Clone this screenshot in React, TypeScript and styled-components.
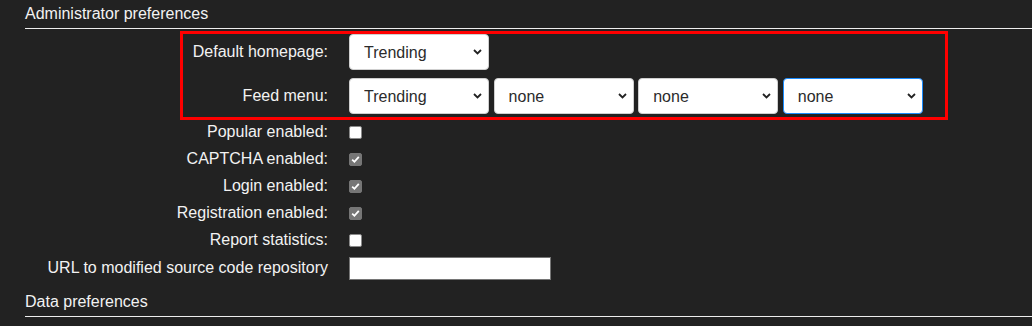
import React from 'react';
import styled, { createGlobalStyle } from 'styled-components';

const GlobalStyle = createGlobalStyle`
  html, body {
    margin: 0;
    padding: 0;
    background: #222222;
  }
  body {
    font-family: "Liberation Sans", Arial, sans-serif;
    font-size: 16px;
    color: #f2f2f2;
    overflow: hidden;
  }
`;

const Page = styled.div`
  width: 1032px;
  height: 326px;
  overflow: hidden;
  background: #222222;
`;

const SectionTitle = styled.div`
  margin-left: 25px;
  padding: 5px 0;
  line-height: 18px;
  border-bottom: 1px solid #eeeeee;
`;

const Highlight = styled.div`
  position: relative;
  padding-top: 5px;
`;

const Annotation = styled.div`
  position: absolute;
  left: 180px;
  top: 2px;
  width: 762px;
  height: 83px;
  border: 3px solid #ff0000;
  pointer-events: none;
`;

const Row = styled.div<{ $height: number; $padTop?: number }>`
  display: grid;
  grid-template-columns: 328px 1fr;
  column-gap: 21px;
  align-items: start;
  height: ${(p) => p.$height}px;
  padding-top: ${(p) => p.$padTop ?? 0}px;
  box-sizing: border-box;
`;

const Label = styled.div<{ $top: number }>`
  text-align: right;
  line-height: 18px;
  padding-top: ${(p) => p.$top}px;
  white-space: nowrap;
`;

const Controls = styled.div`
  display: flex;
  gap: 4.6px;
`;

const SelectWrap = styled.div`
  position: relative;
  width: 140px;
  height: 36px;
`;

const Select = styled.select<{ $focused?: boolean }>`
  appearance: none;
  -webkit-appearance: none;
  width: 100%;
  height: 100%;
  box-sizing: border-box;
  margin: 0;
  padding: 0 24px 0 14px;
  font-family: "Liberation Sans", Arial, sans-serif;
  font-size: 16px;
  color: #2b2b2b;
  background: #ffffff;
  border: 1px solid ${(p) => (p.$focused ? '#1a8cff' : '#cfcfcf')};
  border-radius: 4px;
  outline: none;
`;

const Chevron = styled.svg`
  position: absolute;
  right: 7px;
  top: 15px;
  width: 9px;
  height: 6px;
  pointer-events: none;
`;

const Box = styled.span<{ $checked: boolean }>`
  display: block;
  margin-top: 7px;
  width: 13px;
  height: 13px;
  box-sizing: border-box;
  border-radius: 2px;
  border: 1px solid ${(p) => (p.$checked ? '#767676' : '#8a8a8a')};
  background: ${(p) => (p.$checked ? '#767676' : '#ffffff')};
  svg {
    display: block;
  }
`;

const TextInput = styled.input`
  margin: 0;
  width: 202px;
  height: 23px;
  box-sizing: border-box;
  padding: 1px 2px;
  border: 1px solid #767676;
  background: #ffffff;
  font-family: "Liberation Sans", Arial, sans-serif;
  font-size: 13px;
`;

const Gap = styled.div<{ $h: number }>`
  height: ${(p) => p.$h}px;
`;

const PlainRow = styled.div`
  margin-left: 25px;
  padding-top: 7px;
  line-height: 18px;
`;

const Dropdown = ({ value, options, focused }: { value: string; options: string[]; focused?: boolean }) => (
  <SelectWrap>
    <Select defaultValue={value} $focused={focused}>
      {options.map((o) => (
        <option key={o} value={o}>
          {o}
        </option>
      ))}
    </Select>
    <Chevron viewBox="0 0 9 6">
      <path d="M1 1 L4.5 4.5 L8 1" fill="none" stroke="#222" strokeWidth="1.8" />
    </Chevron>
  </SelectWrap>
);

const Checkbox = ({ checked }: { checked: boolean }) => (
  <Box $checked={checked}>
    {checked && (
      <svg width="11" height="11" viewBox="0 0 11 11">
        <path d="M2.2 5.6 L4.4 7.8 L8.8 2.8" fill="none" stroke="#fff" strokeWidth="1.8" />
      </svg>
    )}
  </Box>
);

const feeds = ['Trending', 'Popular', 'Subscriptions', 'Playlists', 'none'];

const toggles: { label: string; checked: boolean }[] = [
  { label: 'Popular enabled:', checked: false },
  { label: 'CAPTCHA enabled:', checked: true },
  { label: 'Login enabled:', checked: true },
  { label: 'Registration enabled:', checked: true },
  { label: 'Report statistics:', checked: false },
];

export default function App() {
  return (
    <Page>
      <GlobalStyle />
      <SectionTitle>Administrator preferences</SectionTitle>
      <Highlight>
        <Annotation />
        <Row $height={44}>
          <Label $top={9}>Default homepage:</Label>
          <Controls>
            <Dropdown value="Trending" options={feeds} />
          </Controls>
        </Row>
        <Row $height={40}>
          <Label $top={9}>Feed menu:</Label>
          <Controls>
            <Dropdown value="Trending" options={feeds} />
            <Dropdown value="none" options={feeds} />
            <Dropdown value="none" options={feeds} />
            <Dropdown value="none" options={feeds} focused />
          </Controls>
        </Row>
      </Highlight>
      <Gap $h={1} />
      {toggles.map((t) => (
        <Row key={t.label} $height={27}>
          <Label $top={4}>{t.label}</Label>
          <div>
            <Checkbox checked={t.checked} />
          </div>
        </Row>
      ))}
      <Row $height={34} $padTop={3}>
        <Label $top={2}>URL to modified source code repository</Label>
        <div>
          <TextInput type="text" />
        </div>
      </Row>
      <SectionTitle>Data preferences</SectionTitle>
      <PlainRow>Show watch history</PlainRow>
    </Page>
  );
}
